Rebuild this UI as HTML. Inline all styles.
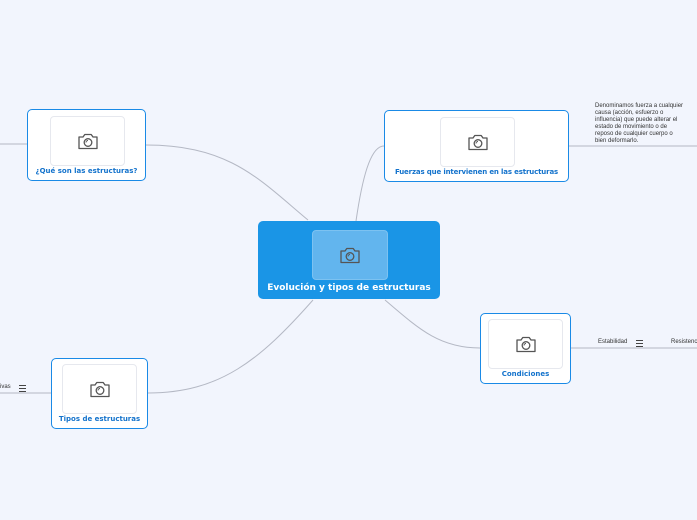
<!DOCTYPE html>
<html><head><meta charset="utf-8"><style>
html,body{margin:0;padding:0}
body{width:697px;height:520px;background:#f2f5fd;position:relative;overflow:hidden;font-family:"DejaVu Sans","Liberation Sans",sans-serif}
.n{position:absolute;box-sizing:border-box;background:#fff;border:1px solid #1a8ae6;border-radius:5px}
.img{position:absolute;box-sizing:border-box;background:#fff;border:1px solid #e6e8ee;border-radius:4px}
.t{position:absolute;left:0;right:0;text-align:center;font-size:7px;font-weight:bold;color:#1473cc;white-space:nowrap;font-family:"DejaVu Sans",sans-serif;letter-spacing:0}
.cam{position:absolute;left:50%;top:50%;margin-left:-11px;margin-top:-9px}
.s{position:absolute;font-size:6px;color:#333;font-family:"Liberation Sans",sans-serif}
.hb{position:absolute;width:7px;height:7px;border-top:1px solid #444;border-bottom:1px solid #444;box-sizing:border-box}
.hb:after{content:"";position:absolute;left:0;right:0;top:2px;border-top:1px solid #444}
</style></head><body>
<svg width="697" height="520" style="position:absolute;left:0;top:0">
<g fill="none" stroke="#b4b8c4" stroke-width="1">
<path d="M146 145 C230 145 260 180 308 220"/>
<path d="M384 146 C370 146 362 180 356 221"/>
<path d="M385 300 C420 330 440 348 480 348"/>
<path d="M313 300 C260 360 220 393 148 393"/>
<path d="M0 144 L27 144"/>
<path d="M0 393 L51 393"/>
<path d="M569 146 L697 146"/>
<path d="M571 348 L697 348"/>
</g>
</svg>
<svg width="0" height="0" style="position:absolute"><defs><g id="c"><path d="M2 5h4l1.8-2.5h6.4l1.8 2.5h4v11.5h-18z" fill="none" stroke="#555" stroke-width="1.3" stroke-linejoin="round"/><circle cx="11" cy="10.5" r="3.8" fill="none" stroke="#555" stroke-width="1.3"/><path d="M9 10.5a2 2 0 0 1 2-2" fill="none" stroke="#555" stroke-width="1"/></g></defs></svg>

<div class="n" style="left:258px;top:221px;width:182px;height:78px;background:#1a95e6;border-color:#1a95e6">
<div class="img" style="left:53px;top:8px;width:76px;height:50px;background:#62b5ee;border-color:#7cc2f1"><svg class="cam" width="22" height="18"><use href="#c"/></svg></div>
<div class="t" style="top:61px;color:#fff;font-size:9px;letter-spacing:0">Evolución y tipos de estructuras</div></div>

<div class="n" style="left:27px;top:109px;width:119px;height:72px">
<div class="img" style="left:22px;top:6px;width:75px;height:50px"><svg class="cam" width="22" height="18"><use href="#c"/></svg></div>
<div class="t" style="top:57px">¿Qué son las estructuras?</div></div>

<div class="n" style="left:384px;top:110px;width:185px;height:72px">
<div class="img" style="left:55px;top:6px;width:75px;height:50px"><svg class="cam" width="22" height="18"><use href="#c"/></svg></div>
<div class="t" style="top:57px;letter-spacing:-0.15px">Fuerzas que intervienen en las estructuras</div></div>

<div class="n" style="left:480px;top:313px;width:91px;height:71px">
<div class="img" style="left:7px;top:5px;width:75px;height:50px"><svg class="cam" width="22" height="18"><use href="#c"/></svg></div>
<div class="t" style="top:56px">Condiciones</div></div>

<div class="n" style="left:51px;top:358px;width:97px;height:71px">
<div class="img" style="left:10px;top:5px;width:75px;height:50px"><svg class="cam" width="22" height="18"><use href="#c"/></svg></div>
<div class="t" style="top:56px">Tipos de estructuras</div></div>

<div class="s" style="left:595px;top:103px;width:100px;line-height:7px">Denominamos fuerza a cualquier<br>causa (acción, esfuerzo o<br>influencia) que puede alterar el<br>estado de movimiento o de<br>reposo de cualquier cuerpo o<br>bien deformarlo.</div>
<div class="s" style="left:598px;top:339px">Estabilidad</div>
<div class="hb" style="left:636px;top:340px"></div>
<div class="s" style="left:671px;top:339px">Resistencia</div>
<div class="s" style="left:0px;top:384px">ivas</div>
<div class="hb" style="left:19px;top:385px"></div>
</body></html>
